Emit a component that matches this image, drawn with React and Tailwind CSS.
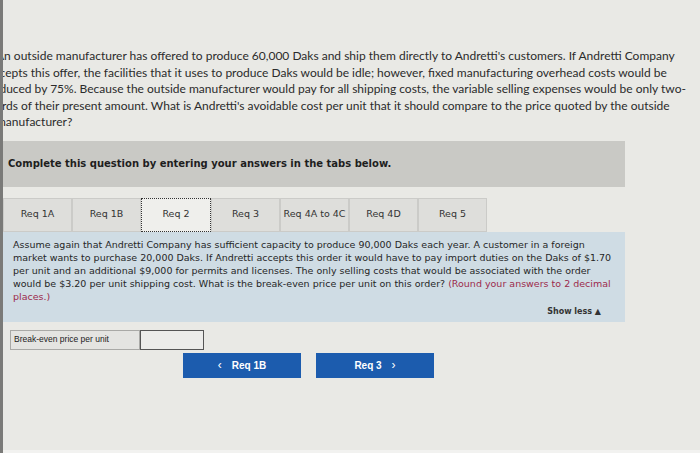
import React from "react";

const tabs = ["Req 1A", "Req 1B", "Req 2", "Req 3", "Req 4A to 4C", "Req 4D", "Req 5"];

export default function App() {
  return (
    <div className="relative w-[700px] h-[453px] overflow-hidden bg-[#e9e9e5] border-l-[3px] border-[#7a7a78]">
      <div className="pt-[48px] pl-0 text-[12px] leading-[16.5px] text-[#2b2b2b] whitespace-nowrap" style={{ fontFamily: 'Lato, "Open Sans", "Liberation Sans", sans-serif' }}>
        <div className="ml-[-7px]">An outside manufacturer has offered to produce 60,000 Daks and ship them directly to Andretti's customers. If Andretti Company</div>
        <div className="ml-[-15px]">accepts this offer, the facilities that it uses to produce Daks would be idle; however, fixed manufacturing overhead costs would be</div>
        <div className="ml-[-14px]">reduced by 75%. Because the outside manufacturer would pay for all shipping costs, the variable selling expenses would be only two-</div>
        <div className="ml-[-15px]">thirds of their present amount. What is Andretti's avoidable cost per unit that it should compare to the price quoted by the outside</div>
        <div className="ml-[-7px]">manufacturer?</div>
      </div>

      <div style={{ fontFamily: '"DejaVu Sans", Verdana, sans-serif' }}>
        <div className="mt-[10px] w-[622px] h-[46px] bg-[#c9c9c5] flex items-center pl-[5px]">
          <span className="text-[10px] font-bold text-[#1e1e1e]">Complete this question by entering your answers in the tabs below.</span>
        </div>

        <div className="mt-[11px] flex h-[34px] w-[622px]">
          {tabs.map((t, i) => (
            <div
              key={t}
              className={
                i === 2
                  ? "w-[70px] flex items-center justify-center text-[9.5px] text-[#333] bg-[#efefec] border border-dotted border-[#333]"
                  : "w-[69px] flex items-center justify-center text-[9.5px] text-[#333] bg-[#dededb] border border-[#cbcbc8]"
              }
            >
              {t}
            </div>
          ))}
        </div>

        <div className="w-[622px] h-[90px] bg-[#cfdce4] pl-[10px] pr-[4px] pt-[6px] text-[9.5px] leading-[13px] text-[#262626]">
          <p>
            Assume again that Andretti Company has sufficient capacity to produce 90,000 Daks each year. A customer in a foreign market wants to purchase 20,000 Daks. If Andretti accepts this order it would have to pay import duties on the Daks of $1.70 per unit and an additional $9,000 for permits and licenses. The only selling costs that would be associated with the order would be $3.20 per unit shipping cost. What is the break-even price per unit on this order?{" "}
            <span className="text-[#9c2a4c]">(Round your answers to 2 decimal places.)</span>
          </p>
          <div className="flex justify-end pr-[20px] mt-[2px]">
            <span className="text-[8px] font-bold text-[#333]">Show less ▲</span>
          </div>
        </div>

        <div className="mt-[8px] ml-[7px] flex h-[20px]">
          <div className="w-[130px] border border-[#a9a9a6] bg-[#e4e4e1] flex items-center pl-[3px] text-[8.5px] text-[#222]" style={{ fontFamily: '"Liberation Sans", Arial, sans-serif' }}>
            Break-even price per unit
          </div>
          <div className="w-[64px] border border-[#555] bg-[#ececea]"></div>
        </div>

        <div className="mt-[3px] flex gap-[15px] pl-[180px]">
          <div className="w-[118px] h-[25px] bg-[#1c5cae] flex items-center justify-center gap-[10px] text-white text-[10px] font-bold" style={{ fontFamily: '"Liberation Sans", Arial, sans-serif' }}>
            <span className="text-[12px] font-normal">‹</span>
            <span>Req 1B</span>
          </div>
          <div className="w-[118px] h-[25px] bg-[#1c5cae] flex items-center justify-center gap-[10px] text-white text-[10px] font-bold" style={{ fontFamily: '"Liberation Sans", Arial, sans-serif' }}>
            <span>Req 3</span>
            <span className="text-[12px] font-normal">›</span>
          </div>
        </div>
      </div>

      <div className="absolute bottom-0 left-0 right-0 h-[3px] bg-[#f2f2f0]"></div>
    </div>
  );
}
